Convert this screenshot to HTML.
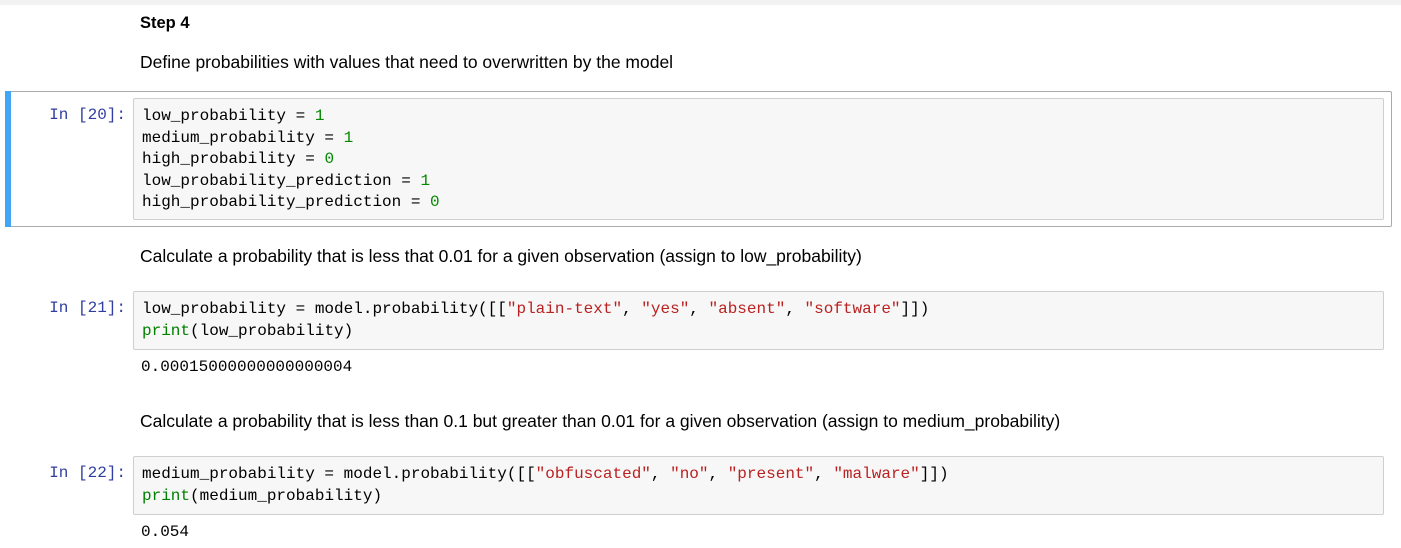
<!DOCTYPE html>
<html><head><style>
body{margin:0;width:1401px;height:548px;background:#fff;position:relative;overflow:hidden;font-family:"Liberation Sans",Arial,sans-serif;}
.top{position:absolute;left:0;top:0;width:1401px;height:5px;background:#f2f2f2;}
.md{position:absolute;left:140px;font-size:17.5px;color:#000;line-height:20px;}
.sel{position:absolute;left:5px;top:91px;width:1386px;height:134px;border:1px solid #ababab;border-left:none;border-radius:2px;}
.bar{position:absolute;left:5px;top:91px;width:6px;height:136px;background:#42a5f5;}
.prompt{position:absolute;left:0;width:126px;text-align:right;font-family:"Liberation Mono",monospace;font-size:16px;color:#303f9f;line-height:21.5px;}
.code{position:absolute;left:133px;width:1251px;background:#f7f7f7;border:1px solid #cfcfcf;border-radius:2px;box-sizing:border-box;padding:7px 0 0 8px;font-family:"Liberation Mono",monospace;font-size:16px;line-height:21.5px;color:#000;white-space:pre;}
.out{position:absolute;left:141px;font-family:"Liberation Mono",monospace;font-size:16px;line-height:21.5px;white-space:pre;}
.n{color:#080}.s{color:#ba2121}.b{color:#008000}
</style></head><body>
<div class="top"></div>
<div class="md" style="top:13px;font-weight:bold;font-size:16.5px">Step 4</div>
<div class="md" style="top:52px">Define probabilities with values that need to overwritten by the model</div>
<div class="sel"></div><div class="bar"></div>
<div class="prompt" style="top:105px">In [20]:</div>
<div class="code" style="top:98px;height:122px">low_probability = <span class="n">1</span>
medium_probability = <span class="n">1</span>
high_probability = <span class="n">0</span>
low_probability_prediction = <span class="n">1</span>
high_probability_prediction = <span class="n">0</span></div>
<div class="md" style="top:246px">Calculate a probability that is less that 0.01 for a given observation (assign to low_probability)</div>
<div class="prompt" style="top:298px">In [21]:</div>
<div class="code" style="top:291px;height:59px">low_probability = model.probability([[<span class="s">"plain-text"</span>, <span class="s">"yes"</span>, <span class="s">"absent"</span>, <span class="s">"software"</span>]])
<span class="b">print</span>(low_probability)</div>
<div class="out" style="top:357px">0.00015000000000000004</div>
<div class="md" style="top:411px">Calculate a probability that is less than 0.1 but greater than 0.01 for a given observation (assign to medium_probability)</div>
<div class="prompt" style="top:463px">In [22]:</div>
<div class="code" style="top:456px;height:59px">medium_probability = model.probability([[<span class="s">"obfuscated"</span>, <span class="s">"no"</span>, <span class="s">"present"</span>, <span class="s">"malware"</span>]])
<span class="b">print</span>(medium_probability)</div>
<div class="out" style="top:522px">0.054</div>
</body></html>
